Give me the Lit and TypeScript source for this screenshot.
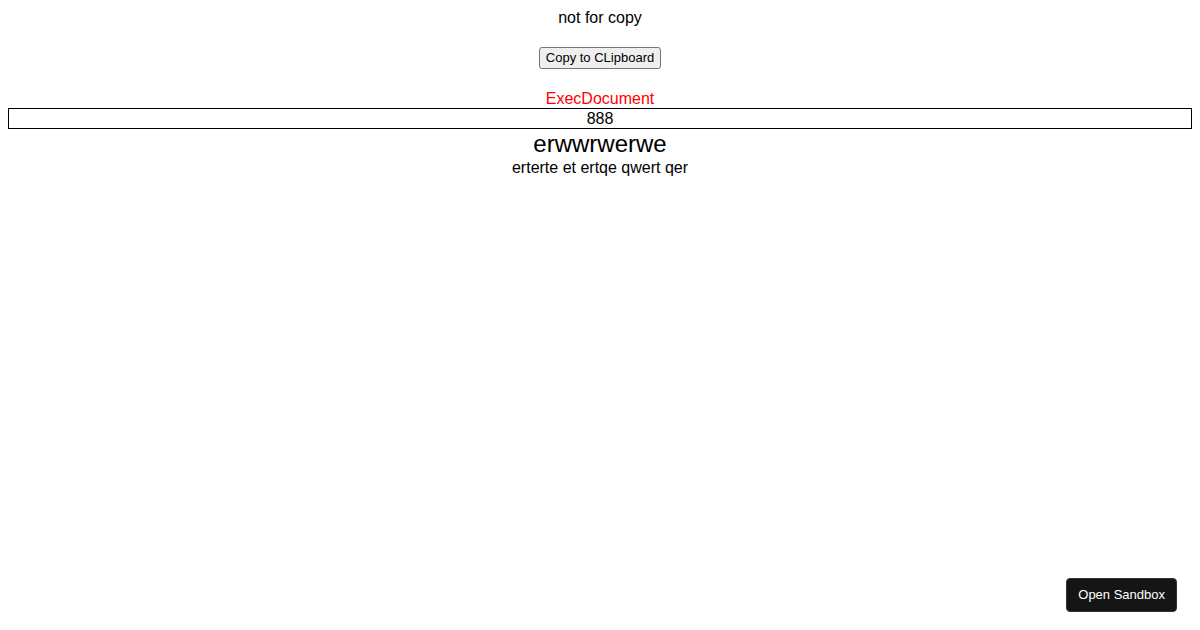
import { LitElement, html, css } from 'lit';
import { customElement, property, query } from 'lit/decorators.js';

@customElement('app-root')
export class AppRoot extends LitElement {
  @property({ type: String }) heading: string = 'erwwrwerwe';
  @property({ type: String }) text: string = 'erterte et ertqe qwert qer';

  @query('.copy-area') copyArea!: HTMLElement;

  static styles = css`
    :host {
      display: block;
      padding: 8px;
      font-family: 'Liberation Sans', Arial, sans-serif;
      font-size: 16px;
      line-height: 19px;
      text-align: center;
      color: #000;
    }
    .toolbar {
      padding: 20px 0;
    }
    .copy-button {
      font-family: inherit;
      font-size: 13px;
      line-height: 16px;
      padding: 2px 6px;
      color: #000;
      background: #efefef;
      border: 1px solid #767676;
      border-radius: 3px;
    }
    .title {
      color: red;
    }
    .number {
      border: 1px solid #000;
    }
    .heading {
      font-size: 24px;
      line-height: 29px;
    }
    .open-link {
      position: fixed;
      right: 23px;
      bottom: 18px;
      padding: 8px 11px;
      font-family: inherit;
      font-size: 13px;
      line-height: 16px;
      color: #fff;
      background: #151515;
      border: 1px solid #343434;
      border-radius: 4px;
    }
  `;

  // Select the rich text and copy it together with its styles
  private copy() {
    const range = document.createRange();
    range.selectNode(this.copyArea);
    const selection = window.getSelection();
    selection?.removeAllRanges();
    selection?.addRange(range);
    document.execCommand('copy');
    selection?.removeAllRanges();
  }

  render() {
    return html`
      <div>not for copy</div>
      <div class="toolbar">
        <button class="copy-button" @click=${this.copy}>Copy to CLipboard</button>
      </div>
      <div class="copy-area">
        <div class="title">ExecDocument</div>
        <div class="number">888</div>
        <div class="heading">${this.heading}</div>
        <div>${this.text}</div>
      </div>
      <button class="open-link">Open Sandbox</button>
    `;
  }
}
